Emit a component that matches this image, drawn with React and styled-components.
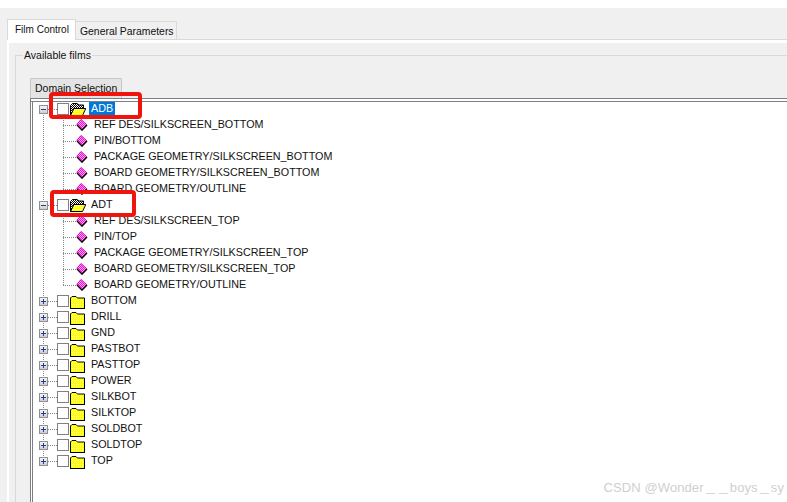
import React from 'react';
import styled, { createGlobalStyle } from 'styled-components';

const GlobalStyle = createGlobalStyle`
  html, body { margin: 0; padding: 0; background: #fff; }
  body { font-family: "Liberation Sans", Arial, sans-serif; font-size: 10.5px; color: #111; }
`;

const Page = styled.div`
  position: relative;
  width: 787px;
  height: 502px;
  overflow: hidden;
  padding-top: 8px;
  box-sizing: border-box;
`;

const Dialog = styled.div`
  height: 494px;
  background: #f0f0f0;
  padding: 11px 0 0 7px;
  box-sizing: border-box;
  display: flex;
  flex-direction: column;
`;

const TabBar = styled.div`
  display: flex;
  align-items: flex-end;
  height: 21px;
  position: relative;
  z-index: 1;
`;

const Tab = styled.div`
  box-sizing: border-box;
  height: ${p => (p.$active ? '21px' : '19px')};
  width: ${p => (p.$active ? '69px' : '101px')};
  padding-left: ${p => (p.$active ? '7px' : '4px')};
  line-height: 19px;
  font-size: ${p => (p.$active ? '10px' : '10.4px')};
  white-space: nowrap;
  background: ${p => (p.$active ? '#fff' : '#f0f0f0')};
  border: 1px solid #d9d9d9;
  border-bottom: ${p => (p.$active ? 'none' : '1px solid #d9d9d9')};
  border-left: ${p => (p.$active ? '1px solid #d9d9d9' : 'none')};
`;

const TabPanel = styled.div`
  flex: 1;
  border-top: 1px solid #d9d9d9;
  border-left: 1px solid #fff;
  margin-top: -1px;
  background: #f0f0f0;
  box-shadow: inset 0 3px 0 #fff, inset 1px 0 0 #fff;
  padding: 15px 0 0 7px;
  display: flex;
  flex-direction: column;
`;

const GroupBox = styled.div`
  position: relative;
  flex: 1;
  border-top: 1px solid #d9d9d9;
  border-left: 1px solid #d9d9d9;
  padding: 22px 0 0 14px;
  display: flex;
  flex-direction: column;
`;

const GroupLabel = styled.span`
  position: absolute;
  top: -8px;
  left: 7px;
  padding: 0 1px;
  line-height: 14px;
  background: #f0f0f0;
`;

const DomainButton = styled.div`
  align-self: flex-start;
  box-sizing: border-box;
  height: 20px;
  line-height: 19px;
  padding: 0 4px 0 4px;
  background: #e4e4e4;
  border: 1px solid #c8c8c8;
  border-bottom: none;
`;

const TreeFrame = styled.div`
  flex: 1;
  background: #fff;
  border-top: 1px solid #7a7f85;
  border-left: 1px solid #7a7f85;
  padding: 2px 0 0 1px;
  position: relative;
  &::before {
    content: "";
    position: absolute;
    top: 1px;
    left: 0;
    right: 0;
    height: 1px;
    background: #fff;
    border-bottom: 1px solid #7a7f85;
  }
  &::after {
    content: "";
    position: absolute;
    top: 2px;
    bottom: 0;
    left: 1px;
    width: 1px;
    background: #7a7f85;
  }
`;

const Row = styled.div`
  position: relative;
  height: 16px;
  display: flex;
  align-items: center;
  padding-left: ${p => (p.$child ? '31px' : '7px')};
  box-sizing: border-box;
  white-space: nowrap;
`;

const VLine = styled.span`
  position: absolute;
  top: ${p => p.$top}px;
  bottom: ${p => p.$bottom}px;
  left: ${p => p.$left}px;
  border-left: 1px dotted #8a8a8a;
`;

const HLine = styled.span`
  width: ${p => p.$w}px;
  border-top: 1px dotted #8a8a8a;
  flex-shrink: 0;
`;

const Expander = styled.span`
  box-sizing: border-box;
  width: 9px;
  height: 9px;
  flex-shrink: 0;
  position: relative;
  z-index: 1;
  border: 1px solid #8e8f8f;
  background: linear-gradient(#f4f4f4, #cfcfcf);
  &::before {
    content: "";
    position: absolute;
    left: 1px;
    right: 1px;
    top: 3px;
    height: 1px;
    background: #1f3f8f;
  }
  &::after {
    content: "";
    display: ${p => (p.$open ? 'none' : 'block')};
    position: absolute;
    top: 1px;
    bottom: 1px;
    left: 3px;
    width: 1px;
    background: #1f3f8f;
  }
`;

const CheckBox = styled.span`
  box-sizing: border-box;
  width: 12px;
  height: 12px;
  flex-shrink: 0;
  background: #fff;
  border: 1px solid #7f7f7f;
  margin-right: 1px;
`;

const Label = styled.span`
  font-size: 10.75px;
  height: 15px;
  line-height: 13px;
  padding: 0 2px;
  margin-left: 3px;
  background: ${p => (p.$selected ? '#0078d7' : 'transparent')};
  color: ${p => (p.$selected ? '#fff' : '#111')};
`;

const ChildLabel = styled(Label)`
  margin-left: 4px;
`;

const Callout = styled.div`
  position: absolute;
  box-sizing: border-box;
  left: ${p => p.$x}px;
  top: ${p => p.$y}px;
  width: ${p => p.$w}px;
  height: 27px;
  border: 4px solid #f0140f;
  border-radius: 4px;
  z-index: 3;
`;

const Watermark = styled.div`
  position: absolute;
  right: 3px;
  bottom: 5px;
  font-size: 13px;
  letter-spacing: 0.1px;
  color: #cfcfcf;
  z-index: 3;
`;

const Icon = styled.svg`
  flex-shrink: 0;
  margin-top: ${p => p.$drop || 0}px;
  margin-right: ${p => p.$after || 0}px;
`;

const PatternDefs = styled.svg`
  position: absolute;
`;

const Patterns = () => (
  <PatternDefs width="0" height="0">
    <defs>
      <pattern id="hatchYellow" width="2" height="2" patternUnits="userSpaceOnUse">
        <rect width="2" height="2" fill="#ffff00" />
        <rect width="1" height="1" fill="#ffffb0" />
      </pattern>
      <pattern id="hatchPink" width="2" height="2" patternUnits="userSpaceOnUse">
        <rect width="2" height="2" fill="#ff00e0" />
        <rect width="1" height="1" fill="#ffb0f0" />
        <rect x="1" y="1" width="1" height="1" fill="#ffb0f0" />
      </pattern>
      <pattern id="hatchBlack" width="2" height="2" patternUnits="userSpaceOnUse">
        <rect width="2" height="2" fill="#fff" />
        <rect width="1" height="1" fill="#000" />
        <rect x="1" y="1" width="1" height="1" fill="#000" />
      </pattern>
    </defs>
  </PatternDefs>
);

const FolderClosed = () => (
  <Icon width="15" height="13" viewBox="0 0 15 13" $drop={2} $after={1}>
    <path d="M0.5 12.5V2L2 0.5H6L7.5 2H14.5V12.5Z" fill="url(#hatchYellow)" stroke="#000" />
    <path d="M0 12.5H15" stroke="#000" />
  </Icon>
);

const FolderOpen = () => (
  <Icon width="16" height="13" viewBox="0 0 16 13" $drop={1}>
    <path d="M0.5 12.5V2.5L2.5 0.5H7L9 2H13.5V6H4Z" fill="url(#hatchBlack)" stroke="#000" />
    <path d="M0.5 12.5L4 5.5H15.8L12.5 12.5Z" fill="url(#hatchYellow)" stroke="#000" />
  </Icon>
);

const Film = () => (
  <Icon width="12" height="12" viewBox="0 0 12 12">
    <path d="M5 0.5L10.5 5.5L6 10.5L0.8 5.5Z" fill="url(#hatchPink)" stroke="#d000b8" />
    <path d="M1 6L6 11.2L11 6" fill="none" stroke="#000" strokeWidth="1.3" />
  </Icon>
);

const groups = [
  { name: 'ADB', selected: true, open: true, items: ['REF DES/SILKSCREEN_BOTTOM', 'PIN/BOTTOM', 'PACKAGE GEOMETRY/SILKSCREEN_BOTTOM', 'BOARD GEOMETRY/SILKSCREEN_BOTTOM', 'BOARD GEOMETRY/OUTLINE'] },
  { name: 'ADT', open: true, items: ['REF DES/SILKSCREEN_TOP', 'PIN/TOP', 'PACKAGE GEOMETRY/SILKSCREEN_TOP', 'BOARD GEOMETRY/SILKSCREEN_TOP', 'BOARD GEOMETRY/OUTLINE'] },
  ...['BOTTOM', 'DRILL', 'GND', 'PASTBOT', 'PASTTOP', 'POWER', 'SILKBOT', 'SILKTOP', 'SOLDBOT', 'SOLDTOP', 'TOP'].map(name => ({ name, items: [] })),
];

const App = () => (
  <Page>
    <GlobalStyle />
    <Patterns />
    <Dialog>
      <TabBar>
        <Tab $active>Film Control</Tab>
        <Tab>General Parameters</Tab>
      </TabBar>
      <TabPanel>
        <GroupBox>
          <GroupLabel>Available films</GroupLabel>
          <DomainButton>Domain Selection</DomainButton>
          <TreeFrame>
            <VLine $left={12} $top={8} $bottom={38} />
            {groups.map(g => (
              <React.Fragment key={g.name}>
                <Row>
                  <Expander $open={g.open} />
                  <HLine $w={9} />
                  <CheckBox />
                  {g.open ? <FolderOpen /> : <FolderClosed />}
                  <Label $selected={g.selected}>{g.name}</Label>
                </Row>
                {g.items.map((item, i) => (
                  <Row $child key={item + i}>
                    <HLine $w={13} />
                    <Film />
                    <ChildLabel>{item}</ChildLabel>
                    <VLine $left={31} $top={i === 0 ? 0 : -8} $bottom={i === g.items.length - 1 ? 8 : -8} />
                  </Row>
                ))}
              </React.Fragment>
            ))}
          </TreeFrame>
        </GroupBox>
      </TabPanel>
    </Dialog>
    <Callout $x={49} $y={92} $w={93} />
    <Callout $x={50} $y={190} $w={86} />
    <Watermark>CSDN @Wonder＿＿boys＿sy</Watermark>
  </Page>
);

export default App;
